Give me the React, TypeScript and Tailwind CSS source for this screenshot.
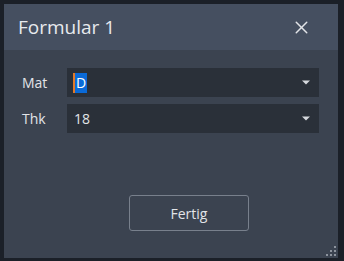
import { X } from "lucide-react";

function Caret() {
  return (
    <svg width="8" height="5" viewBox="0 0 8 5" className="shrink-0">
      <path d="M0 0.5h8L4 4.5z" fill="#d6d9de" />
    </svg>
  );
}

function Field({ label, children }: { label: string; children: React.ReactNode }) {
  return (
    <div className="flex items-center">
      <span className="w-[46px] pl-[1px] text-[14px] text-[#e2e4e8]">{label}</span>
      <div className="flex h-[29px] flex-1 items-center justify-between bg-[#2a3039] pl-[6px] pr-[9px]">
        <div className="flex items-center text-[14px] text-[#e2e4e8]">{children}</div>
        <Caret />
      </div>
    </div>
  );
}

export default function App() {
  return (
    <div
      className="h-[261px] w-[344px] bg-[#1b2028] pb-[3px] pl-[4px] pr-[6px] pt-[4px]"
      style={{ fontFamily: '"Open Sans", "Noto Sans", sans-serif' }}
    >
      <div className="flex h-full flex-col bg-[#3b4350]">
        <div className="flex h-[46px] items-center justify-between bg-[#454f60] pl-[14px] pr-[26px]">
          <span className="text-[19px] text-[#e8eaee]">Formular 1</span>
          <X size={21} strokeWidth={1.7} color="#e2e4e8" />
        </div>
        <div className="flex flex-col gap-[7px] pl-[17px] pr-[19px] pt-[18px]">
          <Field label="Mat">
            <span className="border-l-2 border-[#e07a2a] bg-[#0a6ad8] px-[1px] leading-[20px] text-white">D</span>
          </Field>
          <Field label="Thk">
            <span className="pl-[1px]">18</span>
          </Field>
        </div>
        <div className="flex flex-1 items-start pl-[125px] pt-[62px]">
          <button className="h-[36px] w-[120px] rounded-[3px] border border-[#78808c] text-[14px] text-[#e2e4e8]">
            Fertig
          </button>
        </div>
        <div className="relative h-0">
          <div className="absolute bottom-[2px] right-[2px] grid grid-cols-3 gap-[2px]">
            <span className="h-[2px] w-[2px]" />
            <span className="h-[2px] w-[2px]" />
            <span className="h-[2px] w-[2px] bg-[#8d949e]" />
            <span className="h-[2px] w-[2px]" />
            <span className="h-[2px] w-[2px] bg-[#8d949e]" />
            <span className="h-[2px] w-[2px] bg-[#8d949e]" />
            <span className="h-[2px] w-[2px] bg-[#8d949e]" />
            <span className="h-[2px] w-[2px] bg-[#8d949e]" />
            <span className="h-[2px] w-[2px] bg-[#8d949e]" />
          </div>
        </div>
      </div>
    </div>
  );
}
